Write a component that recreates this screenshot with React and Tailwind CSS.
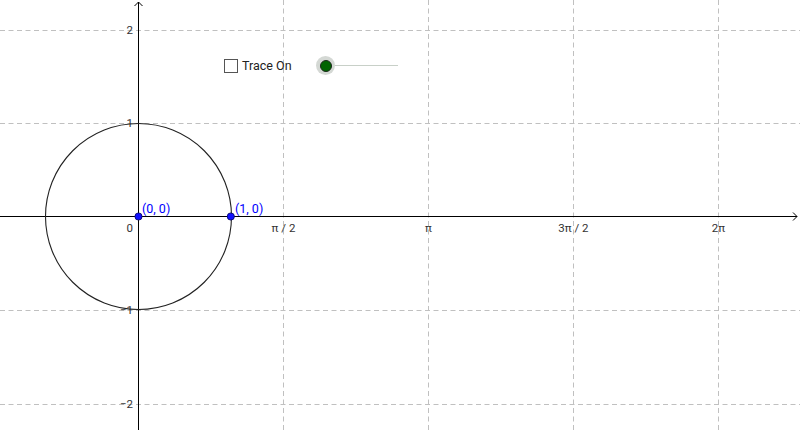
import React from "react";

const OX = 138.5;
const OY = 216.5;
const UX = 92.3;
const UY = 93.5;

const vGrid = [1, 2, 3, 4].map(k => OX + (k * Math.PI * UX) / 2);
const hGrid = [2, 1, -1, -2].map(k => OY - k * UY);

const xLabels = [
    { x: vGrid[0], t: "π / 2" },
    { x: vGrid[1], t: "π" },
    { x: vGrid[2], t: "3π / 2" },
    { x: vGrid[3], t: "2π" },
];

const yLabels = [
    { y: hGrid[0], t: "2" },
    { y: hGrid[1], t: "1" },
    { y: hGrid[2], t: "−1" },
    { y: hGrid[3], t: "−2" },
];

function Graph() {
    return (
        <svg width="800" height="430" className="absolute inset-0" style={{ fontFamily: "Roboto, 'Liberation Sans', sans-serif" }}>
            {/* grid */}
            {vGrid.map((x, i) => (
                <line key={"v" + i} x1={Math.round(x) + 0.5} y1="0" x2={Math.round(x) + 0.5} y2="430" stroke="#c0c0c0" strokeDasharray="5 3.5" />
            ))}
            {hGrid.map((y, i) => (
                <line key={"h" + i} x1="0" y1={Math.round(y) + 0.5} x2="800" y2={Math.round(y) + 0.5} stroke="#c0c0c0" strokeDasharray="5 3.5" />
            ))}

            {/* axes */}
            <line x1="0" y1={OY} x2="797" y2={OY} stroke="#000" />
            <polyline points={`793,${OY - 4} 797,${OY} 793,${OY + 4}`} fill="none" stroke="#000" />
            <line x1={OX} y1="2" x2={OX} y2="430" stroke="#000" />
            <polyline points={`${OX - 4},6 ${OX},2 ${OX + 4},6`} fill="none" stroke="#000" />

            {/* labels */}
            <g fontSize="11.5" fill="#333">
                <text x="133" y="232" textAnchor="end">0</text>
                {xLabels.map(l => (
                    <text key={l.t} x={l.x} y="232" textAnchor="middle">{l.t}</text>
                ))}
                {yLabels.map(l => (
                    <text key={l.t} x="133" y={l.y + 4} textAnchor="end">{l.t}</text>
                ))}
            </g>

            {/* circle */}
            <circle cx={OX} cy={OY} r="93" fill="none" stroke="#222" strokeWidth="1.1" />

            {/* points */}
            <circle cx={OX} cy={OY} r="3.6" fill="#1010ff" stroke="#000060" strokeWidth="0.8" />
            <circle cx={OX + UX} cy={OY} r="3.6" fill="#1010ff" stroke="#000060" strokeWidth="0.8" />
            <g fontSize="12.5" fill="#0000ff">
                <text x="142" y="213">(0, 0)</text>
                <text x="235" y="213">(1, 0)</text>
            </g>
        </svg>
    );
}

export default function App() {
    return (
        <div className="relative w-[800px] h-[430px] bg-white overflow-hidden">
            <Graph />
            <div className="absolute left-[224px] top-[59px] flex items-center gap-1" style={{ fontFamily: "Roboto, 'Liberation Sans', sans-serif" }}>
                <div className="w-[14px] h-[14px] border border-[#555] bg-white" />
                <span className="text-[12.5px] text-[#222] leading-none">Trace On</span>
            </div>
            <div className="absolute left-[316px] top-[56px] flex items-center">
                <div className="w-[19px] h-[19px] rounded-full bg-[#d4d8d4] flex items-center justify-center">
                    <div className="w-[12px] h-[12px] rounded-full bg-[#006400] border border-[#1a2a1a]" />
                </div>
                <div className="w-[63px] h-px bg-[#c8d0c8]" />
            </div>
        </div>
    );
}
